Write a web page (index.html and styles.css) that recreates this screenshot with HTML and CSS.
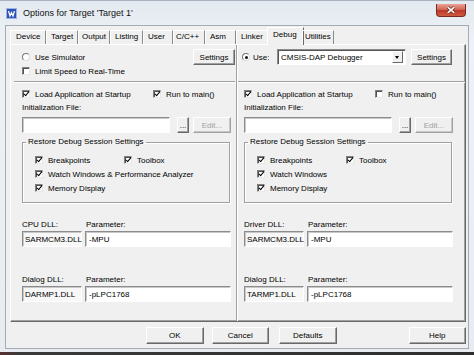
FILE: index.html
```html
<!DOCTYPE html>
<html lang="en">
<head>
    <meta charset="UTF-8">
    <title>Options for Target 'Target 1'</title>
    <link rel="stylesheet" href="styles.css">
</head>
<body>
    <div class="window">
        <div class="titlebar">
            <svg class="app-icon" viewBox="0 0 11 11">
                <rect x="0.5" y="0.5" width="10" height="10" fill="#2d52b8" stroke="#9fb3e6"/>
                <path d="M2.5 3 L4 8 L5.5 4.5 L7 8 L8.5 3" fill="none" stroke="#fff" stroke-width="1.2"/>
            </svg>
            <span class="title">Options for Target 'Target 1'</span>
            <div class="close-btn">
                <svg viewBox="0 0 30 13">
                    <path d="M11.5 3.5 L18.5 9.5 M18.5 3.5 L11.5 9.5" stroke="#6b1d15" stroke-width="3.2"/>
                    <path d="M11.5 3.5 L18.5 9.5 M18.5 3.5 L11.5 9.5" stroke="#fff" stroke-width="1.8"/>
                </svg>
            </div>
        </div>

        <div class="client">
            <div class="tabs">
                <div class="tab tab-device">Device</div>
                <div class="tab tab-target">Target</div>
                <div class="tab tab-output">Output</div>
                <div class="tab tab-listing">Listing</div>
                <div class="tab tab-user">User</div>
                <div class="tab tab-cc">C/C++</div>
                <div class="tab tab-asm">Asm</div>
                <div class="tab tab-linker">Linker</div>
                <div class="tab tab-debug active">Debug</div>
                <div class="tab tab-utilities">Utilities</div>
            </div>

            <div class="panel">
                <div class="half half-left">
                    <div class="top-row">
                        <span class="opt"><span class="radio"></span>Use Simulator</span>
                        <div class="btn btn-settings">Settings</div>
                    </div>
                    <div class="check-row limit-row">
                        <span class="opt"><span class="cb"></span>Limit Speed to Real-Time</span>
                    </div>
                    <div class="sep"></div>
                    <div class="check-row load-row">
                        <span class="opt opt-load"><span class="cb on"></span>Load Application at Startup</span>
                        <span class="opt"><span class="cb on"></span>Run to main()</span>
                    </div>
                    <div class="label-row">Initialization File:</div>
                    <div class="init-row">
                        <div class="field field-init"></div>
                        <div class="btn btn-dots">...</div>
                        <div class="btn btn-edit disabled">Edit...</div>
                    </div>
                    <fieldset class="group">
                        <legend>Restore Debug Session Settings</legend>
                        <div class="group-body">
                            <div class="group-row">
                                <span class="opt opt-bp"><span class="cb on"></span>Breakpoints</span>
                                <span class="opt"><span class="cb on"></span>Toolbox</span>
                            </div>
                            <div class="group-row">
                                <span class="opt"><span class="cb on"></span>Watch Windows &amp; Performance Analyzer</span>
                            </div>
                            <div class="group-row">
                                <span class="opt"><span class="cb on"></span>Memory Display</span>
                            </div>
                        </div>
                    </fieldset>
                    <div class="dll-labels first">
                        <span class="dll-label">CPU DLL:</span>
                        <span>Parameter:</span>
                    </div>
                    <div class="dll-row">
                        <div class="field field-dll readonly">SARMCM3.DLL</div>
                        <div class="field field-param">-MPU</div>
                    </div>
                    <div class="dll-labels second">
                        <span class="dll-label">Dialog DLL:</span>
                        <span>Parameter:</span>
                    </div>
                    <div class="dll-row">
                        <div class="field field-dll readonly">DARMP1.DLL</div>
                        <div class="field field-param">-pLPC1768</div>
                    </div>
                </div>

                <div class="divider"></div>

                <div class="half half-right">
                    <div class="top-row">
                        <span class="radio on use-radio"></span>
                        <span class="use-label">Use:</span>
                        <div class="combo">
                            <span class="combo-text">CMSIS-DAP Debugger</span>
                            <span class="combo-arrow"></span>
                        </div>
                        <div class="btn btn-settings-r">Settings</div>
                    </div>
                    <div class="check-row limit-row"></div>
                    <div class="sep"></div>
                    <div class="check-row load-row">
                        <span class="opt opt-load"><span class="cb on"></span>Load Application at Startup</span>
                        <span class="opt"><span class="cb"></span>Run to main()</span>
                    </div>
                    <div class="label-row">Initialization File:</div>
                    <div class="init-row">
                        <div class="field field-init"></div>
                        <div class="btn btn-dots">...</div>
                        <div class="btn btn-edit disabled">Edit...</div>
                    </div>
                    <fieldset class="group">
                        <legend>Restore Debug Session Settings</legend>
                        <div class="group-body">
                            <div class="group-row">
                                <span class="opt opt-bp"><span class="cb on"></span>Breakpoints</span>
                                <span class="opt"><span class="cb on"></span>Toolbox</span>
                            </div>
                            <div class="group-row">
                                <span class="opt"><span class="cb on"></span>Watch Windows</span>
                            </div>
                            <div class="group-row">
                                <span class="opt"><span class="cb on"></span>Memory Display</span>
                            </div>
                        </div>
                    </fieldset>
                    <div class="dll-labels first">
                        <span class="dll-label">Driver DLL:</span>
                        <span>Parameter:</span>
                    </div>
                    <div class="dll-row">
                        <div class="field field-dll readonly">SARMCM3.DLL</div>
                        <div class="field field-param">-MPU</div>
                    </div>
                    <div class="dll-labels second">
                        <span class="dll-label">Dialog DLL:</span>
                        <span>Parameter:</span>
                    </div>
                    <div class="dll-row">
                        <div class="field field-dll readonly">TARMP1.DLL</div>
                        <div class="field field-param">-pLPC1768</div>
                    </div>
                </div>
            </div>

            <div class="buttons">
                <div class="btn btn-ok">OK</div>
                <div class="btn btn-cancel">Cancel</div>
                <div class="btn btn-defaults">Defaults</div>
                <div class="btn btn-help">Help</div>
            </div>
        </div>
    </div>
</body>
</html>
```

FILE: styles.css
```css
* {
    box-sizing: border-box;
}

html, body {
    margin: 0;
}

body {
    width: 474px;
    height: 355px;
    overflow: hidden;
    background: linear-gradient(to right, #5a3030, #3a3a3a 20px, #2e2e2e);
    font-family: "Liberation Sans", Arial, sans-serif;
    font-size: 8px;
    color: #000;
}

.window {
    height: 352px;
    display: flex;
    flex-direction: column;
    padding: 0 5px 3px 5px;
    border-top: 1px solid #a9b2bc;
    background: linear-gradient(to bottom, #e3e9f0, #eef2f6 40px, #e8ecf0);
}

/* title bar */
.titlebar {
    height: 24px;
    display: flex;
    align-items: center;
}
.app-icon {
    width: 11px;
    height: 11px;
    margin-left: 1px;
}
.title {
    margin-left: 6px;
    font-size: 9px;
    color: #111;
}
.close-btn {
    align-self: flex-start;
    margin: 3px 3px 0 auto;
    width: 30px;
    height: 13px;
    border: 1px solid #7a2a20;
    border-top: none;
    border-radius: 0 0 4px 4px;
    background: linear-gradient(to bottom, #e9a397, #d0604f 50%, #b9372a 51%, #cf5a3e);
}
.close-btn svg {
    display: block;
    width: 28px;
    height: 12px;
}

/* client area */
.client {
    flex: 1;
    display: flex;
    flex-direction: column;
    background: #f0f0f0;
    border: 1px solid #a3acb6;
    padding: 0 2px 0 4px;
}

.tabs {
    height: 18px;
    display: flex;
    align-items: flex-end;
    position: relative;
    z-index: 1;
}
.tab {
    height: 14px;
    line-height: 12px;
    padding-left: 4px;
    border: 1px solid;
    border-color: #fff #8a8a8a transparent #fff;
    border-bottom: none;
    white-space: nowrap;
}
.tab.active {
    height: 18px;
    margin: 0 -2px -1px;
    padding-left: 5px;
    background: #f0f0f0;
    border-color: #fff #696969 transparent #fff;
    line-height: 13px;
}
.tab-device { width: 36px; padding-left: 5px; }
.tab-target { width: 32px; }
.tab-output { width: 32px; padding-left: 3px; }
.tab-listing { width: 33px; }
.tab-user { width: 30px; }
.tab-cc { width: 32px; padding-left: 2px; }
.tab-asm { width: 31px; }
.tab-linker { width: 33px; }
.tab-debug { width: 37px; }
.tab-utilities { width: 32px; padding-left: 2px; }

.panel {
    height: 278px;
    display: flex;
    border: 1px solid;
    border-color: #fff #696969 #696969 #fff;
    box-shadow: inset -1px -1px 0 #a0a0a0;
}

.half {
    display: flex;
    flex-direction: column;
    padding-top: 4px;
}
.half-left {
    width: 225px;
    padding-left: 11px;
}
.half-right {
    flex: 1;
    padding-left: 6px;
}
.divider {
    width: 2px;
    border-left: 1px solid #a0a0a0;
    border-right: 1px solid #fff;
}

.top-row {
    height: 16px;
    display: flex;
    align-items: center;
}
.half-left .top-row {
    width: 213px;
}

.opt {
    display: flex;
    align-items: center;
    white-space: nowrap;
}

.radio {
    position: relative;
    width: 8px;
    height: 8px;
    margin-right: 5px;
    border-radius: 50%;
    border: 1px solid;
    border-color: #777 #ddd #ddd #777;
    background: #fff;
}
.radio.on::after {
    content: '';
    position: absolute;
    left: 1.5px;
    top: 1.5px;
    width: 3px;
    height: 3px;
    border-radius: 50%;
    background: #111;
}
.use-radio {
    margin-left: -2px;
    margin-right: 3px;
}
.use-label {
    width: 24px;
}

.cb {
    position: relative;
    flex: none;
    width: 8px;
    height: 8px;
    margin-right: 5px;
    border: 1px solid;
    border-color: #808080 #e8e8e8 #e8e8e8 #808080;
    box-shadow: inset 1px 1px 0 #505050;
    background: #fff;
}
.cb.on::after {
    content: '';
    position: absolute;
    left: 2px;
    top: -1px;
    width: 2px;
    height: 5px;
    border-right: 1.6px solid #000;
    border-bottom: 1.6px solid #000;
    transform: rotate(40deg);
}

.check-row {
    height: 10px;
    display: flex;
    align-items: center;
}
.limit-row {
    margin-top: 1px;
}
.load-row {
    margin-top: 6px;
}
.opt-load {
    width: 131px;
}

.sep {
    height: 2px;
    margin-top: 5px;
    border-top: 1px solid #a0a0a0;
    border-bottom: 1px solid #fff;
}
.half-left .sep {
    margin-left: -8px;
    width: 221px;
}
.half-right .sep {
    margin-left: -6px;
}

.label-row {
    height: 10px;
    line-height: 10px;
    margin-top: 4px;
}

.init-row {
    height: 16px;
    margin-top: 4px;
    display: flex;
}

.btn {
    display: flex;
    align-items: center;
    justify-content: center;
    background: #f0f0f0;
    border: 1px solid;
    border-color: #fff #696969 #696969 #fff;
    box-shadow: inset -1px -1px 0 #a0a0a0;
    white-space: nowrap;
}
.btn.disabled {
    color: #a0a0a0;
    border-color: #fff #a0a0a0 #a0a0a0 #fff;
    box-shadow: inset -1px -1px 0 #c8c8c8;
}
.btn-settings {
    width: 42px;
    height: 16px;
    margin-left: auto;
}
.btn-settings-r {
    width: 41px;
    height: 16px;
    margin-left: 5px;
}
.btn-dots {
    width: 12px;
    margin-left: 7px;
}
.btn-edit {
    width: 38px;
    margin-left: 4px;
}

.field {
    height: 100%;
    display: flex;
    align-items: center;
    padding-left: 2px;
    background: #fff;
    border: 1px solid;
    border-color: #8c8c8c #fff #fff #8c8c8c;
    box-shadow: inset 1px 1px 0 #c8c8c8;
    white-space: nowrap;
}
.field.readonly {
    background: #f7f7f7;
}
.field-init {
    width: 148px;
}

.combo {
    width: 129px;
    height: 16px;
    display: flex;
    align-items: center;
    justify-content: space-between;
    padding: 1px 2px 1px 3px;
    background: #fff;
    border: 1px solid;
    border-color: #8c8c8c #fff #fff #8c8c8c;
    box-shadow: inset 1px 1px 0 #555;
}
.combo-arrow {
    position: relative;
    width: 11px;
    height: 12px;
    background: #f0f0f0;
    border: 1px solid;
    border-color: #fff #696969 #696969 #fff;
}
.combo-arrow::after {
    content: '';
    position: absolute;
    left: 2px;
    top: 4px;
    border-left: 2.5px solid transparent;
    border-right: 2.5px solid transparent;
    border-top: 3px solid #000;
}

.group {
    width: 208px;
    margin: 4px 0 0;
    padding: 0;
    border: 1px solid #a0a0a0;
    box-shadow: inset 1px 1px 0 #fff, 1px 1px 0 #fff;
}
.group legend {
    margin-left: 3px;
    padding: 0 2px;
    height: 10px;
    line-height: 10px;
}
.group-body {
    padding: 6px 0 7px 12px;
}
.group-row {
    height: 14px;
    display: flex;
    align-items: center;
}
.opt-bp {
    width: 89px;
}

.dll-labels {
    height: 10px;
    line-height: 10px;
    display: flex;
}
.dll-labels.first {
    margin-top: 17px;
}
.dll-labels.second {
    margin-top: 28px;
}
.dll-label {
    width: 64px;
}
.dll-row {
    height: 16px;
    margin-top: 1px;
    display: flex;
}
.field-dll {
    width: 60px;
}
.field-param {
    width: 146px;
    margin-left: 3px;
    padding-left: 3px;
}

.buttons {
    display: flex;
    margin-top: 5px;
}
.buttons .btn {
    width: 58px;
    height: 17px;
}
.btn-ok {
    margin-left: 136px;
}
.btn-cancel {
    margin-left: 8px;
}
.btn-defaults {
    margin-left: 10px;
}
.btn-help {
    margin-left: 72px;
}
```
